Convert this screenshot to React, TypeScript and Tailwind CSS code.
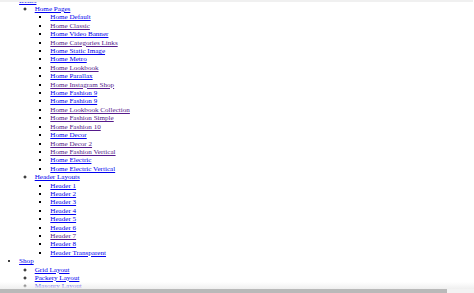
import React from 'react';

type Item = { label: string; visited?: boolean };

const homePages: Item[] = [
  { label: 'Home Default' },
  { label: 'Home Classic', visited: true },
  { label: 'Home Video Banner' },
  { label: 'Home Categories Links', visited: true },
  { label: 'Home Static Image' },
  { label: 'Home Metro' },
  { label: 'Home Lookbook', visited: true },
  { label: 'Home Parallax' },
  { label: 'Home Instagram Shop', visited: true },
  { label: 'Home Fashion 9' },
  { label: 'Home Fashion 9' },
  { label: 'Home Lookbook Collection', visited: true },
  { label: 'Home Fashion Simple', visited: true },
  { label: 'Home Fashion 10', visited: true },
  { label: 'Home Decor' },
  { label: 'Home Decor 2', visited: true },
  { label: 'Home Fashion Vertical', visited: true },
  { label: 'Home Electric' },
  { label: 'Home Electric Vertical' },
];

const headerLayouts: Item[] = [
  { label: 'Header 1' },
  { label: 'Header 2' },
  { label: 'Header 3' },
  { label: 'Header 4' },
  { label: 'Header 5' },
  { label: 'Header 6' },
  { label: 'Header 7', visited: true },
  { label: 'Header 8' },
  { label: 'Header Transparent' },
];

const shopLayouts: Item[] = [
  { label: 'Grid Layout' },
  { label: 'Packery Layout' },
  { label: 'Masonry Layout' },
];

const Link: React.FC<{ item: Item }> = ({ item }) => (
  <a href="#" className={`underline ${item.visited ? 'text-[#551a8b]' : 'text-[#0000ee]'}`}>
    {item.label}
  </a>
);

const SubList: React.FC<{ items: Item[] }> = ({ items }) => (
  <ul className="list-[square] pl-[15.6px]">
    {items.map((item, i) => (
      <li key={i}>
        <Link item={item} />
      </li>
    ))}
  </ul>
);

export default function App() {
  return (
    <div className="relative h-[293px] w-[474px] overflow-hidden bg-white text-black font-['Liberation_Serif',serif] text-[7.1px] leading-[8.41px]">
      <div className="pl-[3.5px] -mt-[3.4px]">
        <ul className="list-disc pl-[15.6px]">
          <li>
            <Link item={{ label: 'Demo' }} />
            <ul className="list-[circle] pl-[15.6px]">
              <li>
                <Link item={{ label: 'Home Pages' }} />
                <SubList items={homePages} />
              </li>
              <li>
                <Link item={{ label: 'Header Layouts' }} />
                <SubList items={headerLayouts} />
              </li>
            </ul>
          </li>
          <li>
            <Link item={{ label: 'Shop' }} />
            <ul className="list-[circle] pl-[15.6px]">
              {shopLayouts.map((item, i) => (
                <li key={i}>
                  <Link item={item} />
                </li>
              ))}
            </ul>
          </li>
        </ul>
      </div>

      {/* top edge */}
      <div className="absolute left-0 top-0 h-[2px] w-[473px] bg-[#f0f0f0]" />

      {/* horizontal scrollbar */}
      <div className="absolute bottom-[4px] left-0 h-[7px] w-full bg-gradient-to-b from-white/0 to-[#efefef]" />
      <div className="absolute bottom-0 left-0 flex h-[4px] w-full">
        <div className="h-full w-[447px] bg-[#b9b9b9]" />
        <div className="h-full flex-1 bg-[#f3f3f3]" />
      </div>
    </div>
  );
}
